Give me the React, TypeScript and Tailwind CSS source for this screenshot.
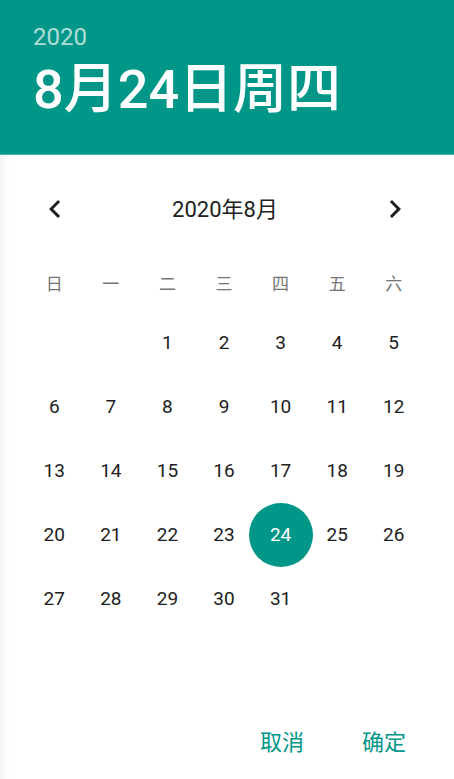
import React from 'react';

const font = { fontFamily: 'Roboto, "Noto Sans CJK SC", sans-serif' };

const weekdays = ['日', '一', '二', '三', '四', '五', '六'];

// the 1st lands in the 二 column
const leading = 2;
const selected = 24;

function ChevronLeft() {
  return (
    <svg width="36" height="36" viewBox="0 0 24 24" fill="#212121">
      <path d="M15.41 7.41L14 6l-6 6 6 6 1.41-1.41L10.83 12z" />
    </svg>
  );
}

function ChevronRight() {
  return (
    <svg width="36" height="36" viewBox="0 0 24 24" fill="#212121">
      <path d="M8.59 16.59L10 18l6-6-6-6-1.41 1.41L13.17 12z" />
    </svg>
  );
}

export default function App() {
  const cells: (number | null)[] = [];
  for (let i = 0; i < leading; i++) cells.push(null);
  for (let d = 1; d <= 31; d++) cells.push(d);

  return (
    <div className="flex h-[779px] w-[454px] flex-col bg-white" style={font}>
      <header className="h-[155px] border-b border-[#4db6ac] bg-[#009688] px-[33px] pt-[22px]">
        <div className="text-[24px] leading-[30px] text-white/70">2020</div>
        <div className="mt-[6px] text-[54px] font-medium leading-[64px] text-white">8月24日周四</div>
      </header>

      <div className="flex flex-1 flex-col bg-[linear-gradient(to_right,#f5f5f5,#ffffff_10px)]">
        <div className="ml-[27px] mt-[26px] grid h-[56px] w-[396px] grid-cols-7 items-center">
          <div className="flex justify-center">
            <ChevronLeft />
          </div>
          <div className="col-span-5 text-center text-[22px] text-[#212121]">2020年8月</div>
          <div className="flex justify-center">
            <ChevronRight />
          </div>
        </div>

        <div className="ml-[26px] mt-[18px] grid h-[56px] w-[396px] grid-cols-7 items-center pt-[4px]">
          {weekdays.map((w) => (
            <div key={w} className="text-center text-[17px] text-[#757575]">
              {w}
            </div>
          ))}
        </div>

        <div className="ml-[26px] grid w-[396px] grid-cols-7">
          {cells.map((d, i) => (
            <div key={i} className="flex h-[64px] items-center justify-center">
              {d === selected ? (
                <div className="flex h-[64px] w-[64px] shrink-0 items-center justify-center rounded-full bg-[#009688] text-[19px] text-white">
                  {d}
                </div>
              ) : (
                <span className="text-[19px] text-[#212121]">{d ?? ''}</span>
              )}
            </div>
          ))}
        </div>

        <div className="mt-auto mb-[13px] flex h-[48px] items-center justify-end gap-[58px] pr-[48px]">
          <button className="text-[22px] text-[#009688]">取消</button>
          <button className="text-[22px] text-[#009688]">确定</button>
        </div>
      </div>
    </div>
  );
}
